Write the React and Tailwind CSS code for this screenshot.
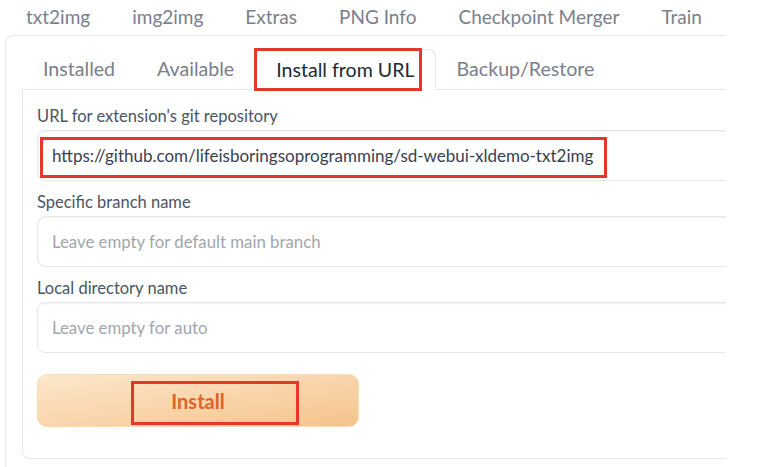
const topTabs = ["txt2img", "img2img", "Extras", "PNG Info", "Checkpoint Merger", "Train"];
const subTabs = ["Installed", "Available", "Install from URL", "Backup/Restore"];

const Field = ({ label, value, placeholder, marked }) => (
    <div className="flex flex-col">
        <label className="text-[16.5px] leading-[20px] text-[#4b5563] mb-[4px]">{label}</label>
        <div className="relative h-[51px] w-full rounded-lg border border-[#e5e7eb] bg-white shadow-[inset_0_1px_2px_rgba(0,0,0,0.06)] flex items-center pl-[14px]">
            {value ? (
                <span className="text-[17px] text-[#374151]">{value}</span>
            ) : (
                <span className="text-[16.8px] text-[#a1a6ae]">{placeholder}</span>
            )}
            {marked && (
                <div className="absolute left-[2px] top-[6px] w-[567px] h-[41px] border-[3px] border-[#e5382a]" />
            )}
        </div>
    </div>
);

export default function App() {
    return (
        <div className="w-[768px] h-[467px] bg-white overflow-hidden" style={{ fontFamily: "Lato, 'Noto Sans', sans-serif" }}>
            <div className="w-[726px] h-[467px] overflow-hidden pl-[5px]">
                <div className="w-[800px]">
                    {/* main tabs */}
                    <div className="flex h-[35px] items-center">
                        {topTabs.map((t) => (
                            <div key={t} className="px-[21px] text-[19px] text-[#7a808b]">{t}</div>
                        ))}
                    </div>

                    {/* outer panel */}
                    <div className="h-[440px] rounded-tl-lg border border-[#e5e7eb] pl-[16px] pt-[13px]">
                        <div className="flex h-[41px] items-end border-b border-[#e5e7eb]">
                            {subTabs.map((t) =>
                                t === "Install from URL" ? (
                                    <div key={t} className="relative -mb-px flex h-[41px] items-center rounded-t-lg border border-b-white border-[#e5e7eb] bg-white px-[20px] text-[19.6px] text-[#1f2937]">
                                        {t}
                                        <div className="absolute -left-[2px] -top-[2px] w-[168px] h-[43px] border-[3px] border-[#e5382a]" />
                                    </div>
                                ) : (
                                    <div key={t} className="flex h-[40px] items-center px-[21px] text-[19.6px] text-[#7a808b]">{t}</div>
                                )
                            )}
                        </div>

                        {/* tab content */}
                        <div className="h-[369px] rounded-b-lg border-x border-b border-[#e5e7eb] px-[14px] pt-[16px] flex flex-col gap-[11px]">
                            <Field label="URL for extension's git repository" value="https://github.com/lifeisboringsoprogramming/sd-webui-xldemo-txt2img" marked />
                            <Field label="Specific branch name" placeholder="Leave empty for default main branch" />
                            <Field label="Local directory name" placeholder="Leave empty for auto" />

                            <div className="mt-[10px]">
                                <button className="relative h-[53px] w-[322px] rounded-[10px] border border-[#f7dcb8] bg-gradient-to-br from-[#fde7cc] to-[#f5c38b] text-[20px] font-bold text-[#e0632a]">
                                    Install
                                    <div className="absolute left-[93px] top-[6px] w-[168px] h-[44px] border-[3px] border-[#e5382a]" />
                                </button>
                            </div>
                        </div>
                    </div>
                </div>
            </div>
        </div>
    );
}
